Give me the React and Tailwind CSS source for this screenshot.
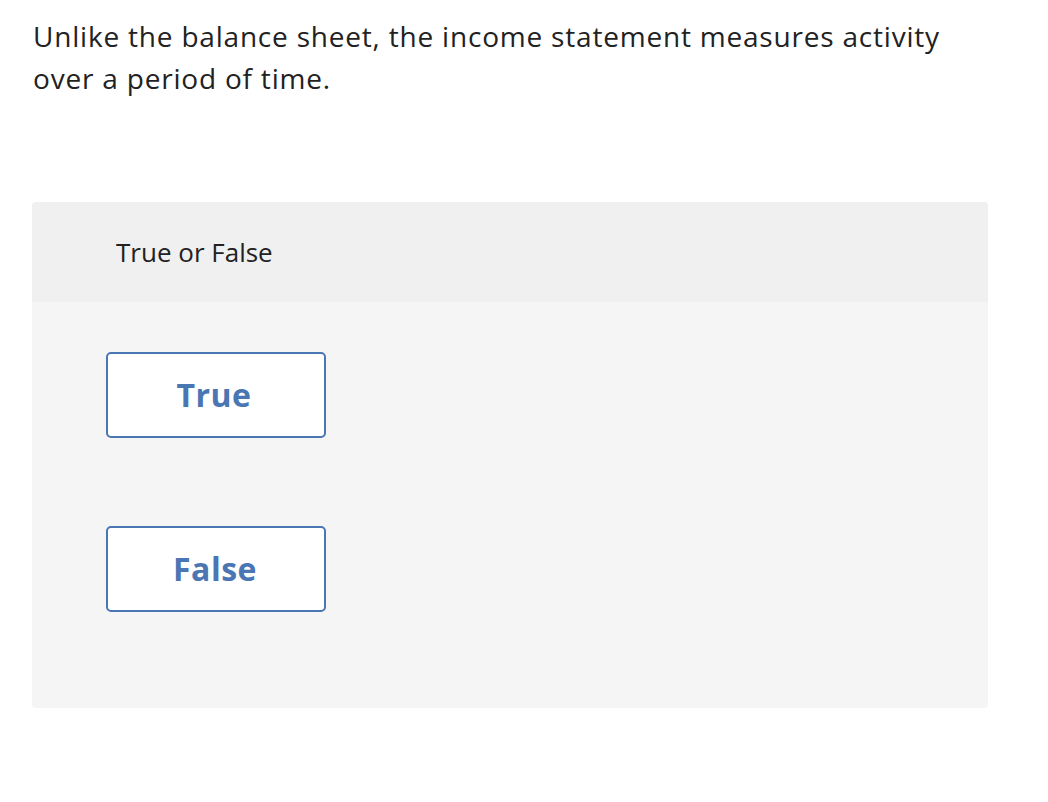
export default function App() {
  return (
    <div className="min-h-[802px] bg-white font-['Open_Sans',sans-serif] text-[#222222]">
      <div className="px-[33px] pt-[15px]">
        <p className="text-[28px] leading-[42px] tracking-[0.8px] w-[930px]">
          Unlike the balance sheet, the income statement measures activity over a period of time.
        </p>
      </div>
      <div className="ml-[32px] mt-[103px] w-[956px] rounded-[4px] overflow-hidden bg-[#f5f5f5]">
        <div className="h-[100px] bg-[#f0f0f0] flex items-center pl-[84px]">
          <span className="text-[26px] text-[#222222]">True or False</span>
        </div>
        <div className="pl-[74px] pt-[50px] pb-[96px] flex flex-col gap-[88px]">
          <button className="w-[220px] h-[86px] bg-white border-2 border-[#4a76b4] rounded-[5px] text-[#4a76b4] text-[32px] font-bold tracking-[0.5px] pr-[4px]">
            True
          </button>
          <button className="w-[220px] h-[86px] bg-white border-2 border-[#4a76b4] rounded-[5px] text-[#4a76b4] text-[32px] font-bold tracking-[0.5px] pr-[2px]">
            False
          </button>
        </div>
      </div>
    </div>
  );
}
